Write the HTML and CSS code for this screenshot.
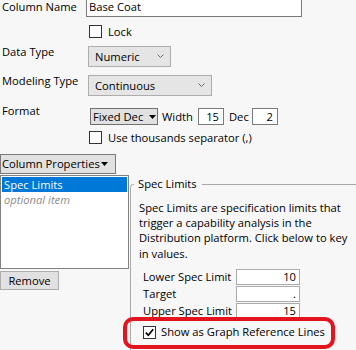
FILE: index.html
```html
<!DOCTYPE html>
<html>
<head>
<meta charset="utf-8">
<link rel="stylesheet" href="styles.css">
</head>
<body>
<div class="page">
  <div class="row r-name">
    <span class="label">Column Name</span>
    <input class="textbox name-input" type="text" value="Base Coat" readonly>
  </div>
  <div class="row r-lock indented">
    <span class="check"></span><span class="check-text">Lock</span>
  </div>
  <div class="row r-dtype">
    <span class="label">Data Type</span>
    <div class="combo combo-numeric"><span>Numeric</span>
      <svg class="chev" width="7" height="4" viewBox="0 0 7 4"><polyline points="0.5,0.5 3.5,3.5 6.5,0.5" fill="none" stroke="#6a6a6a" stroke-width="1"/></svg>
    </div>
  </div>
  <div class="row r-mtype">
    <span class="label">Modeling Type</span>
    <div class="combo combo-cont"><span>Continuous</span>
      <svg class="chev" width="7" height="4" viewBox="0 0 7 4"><polyline points="0.5,0.5 3.5,3.5 6.5,0.5" fill="none" stroke="#6a6a6a" stroke-width="1"/></svg>
    </div>
  </div>
  <div class="row r-format">
    <span class="label">Format</span>
    <div class="dropdown"><span>Fixed Dec</span>
      <svg width="7" height="4" viewBox="0 0 7 4"><polygon points="0,0 7,0 3.5,4" fill="#000"/></svg>
    </div>
    <span class="unit-label w-label">Width</span>
    <input class="textbox num-input" type="text" value="15" readonly>
    <span class="unit-label d-label">Dec</span>
    <input class="textbox num-input" type="text" value="2" readonly>
  </div>
  <div class="row r-sep indented">
    <span class="check"></span><span class="check-text">Use thousands separator (,)</span>
  </div>
  <div class="row r-props">
    <div class="button props-btn"><span>Column Properties</span>
      <svg width="7" height="4" viewBox="0 0 7 4"><polygon points="0,0 7,0 3.5,4" fill="#000"/></svg>
    </div>
  </div>
  <div class="bottom">
    <div class="left">
      <div class="listbox">
        <div class="item selected">Spec Limits</div>
        <div class="item placeholder">optional item</div>
      </div>
      <div class="button remove-btn">Remove</div>
    </div>
    <fieldset class="group">
      <legend>Spec Limits</legend>
      <p class="desc">Spec Limits are specification limits that<br>trigger a capability analysis in the<br>Distribution platform. Click below to key<br>in values.</p>
      <div class="spec-grid">
        <span class="spec-label">Lower Spec Limit</span>
        <input class="textbox spec-input" type="text" value="10" readonly>
        <span class="spec-label">Target</span>
        <input class="textbox spec-input" type="text" value="." readonly>
        <span class="spec-label">Upper Spec Limit</span>
        <input class="textbox spec-input" type="text" value="15" readonly>
      </div>
      <div class="show-row">
        <span class="check checked"><svg width="11" height="11" viewBox="0 0 11 11"><polyline points="1.8,5.6 4.3,8.2 9.2,2.2" fill="none" stroke="#000" stroke-width="1.7"/></svg></span>
        <span class="check-text show-text">Show as Graph Reference Lines</span>
        <div class="callout"></div>
      </div>
    </fieldset>
  </div>
</div>
</body>
</html>
```
FILE: styles.css
```css
html, body {
  margin: 0;
  padding: 0;
  background: #f7f7f7;
  overflow: hidden;
}
body {
  font-family: "Open Sans", "Noto Sans", sans-serif;
  font-size: 11.2px;
  line-height: 16px;
  color: #000;
}
.page {
  width: 356px;
  height: 350px;
  overflow: hidden;
}
.row {
  display: flex;
  align-items: center;
  white-space: nowrap;
}
.indented {
  padding-left: 89px;
}
.label {
  width: 86px;
  flex: none;
  padding-left: 2px;
  box-sizing: border-box;
  align-self: flex-start;
}
.textbox {
  box-sizing: border-box;
  border: 1px solid #7a7a7a;
  background: #fff;
  font: inherit;
  color: #000;
  margin: 0;
  outline: none;
  border-radius: 0;
}
.r-name {
  margin-top: -3px;
  height: 20px;
}
.r-name .label {
  margin-top: 1.5px;
}
.name-input {
  width: 216px;
  height: 20px;
  padding: 0 2px 2px 2px;
}
.r-lock {
  margin-top: 7px;
  height: 15px;
}
.check {
  width: 13px;
  height: 13px;
  box-sizing: border-box;
  border: 1px solid #333;
  background: #fff;
  flex: none;
  display: flex;
}
.check-text {
  margin-left: 6px;
}
.r-dtype {
  margin-top: 7px;
  height: 21px;
}
.r-mtype {
  margin-top: 8px;
  height: 21px;
}
.r-dtype .label,
.r-mtype .label {
  margin-top: -2.5px;
}
.combo {
  box-sizing: border-box;
  height: 21px;
  margin-left: 2px;
  border: 1px solid #adadad;
  background: #e5e5e5;
  display: flex;
  align-items: center;
  justify-content: space-between;
  padding: 0 6px;
}
.chev {
  margin-top: -2px;
}
.combo-numeric {
  width: 83px;
}
.combo-cont {
  width: 124px;
}
.r-format {
  margin-top: 12px;
  height: 17px;
}
.r-format .label {
  margin-top: -5.3px;
}
.dropdown {
  box-sizing: border-box;
  width: 68px;
  height: 17px;
  margin-left: 4px;
  border: 1px solid #707070;
  background: #e1e1e1;
  display: flex;
  align-items: center;
  justify-content: space-between;
  padding: 0 1px 0 2px;
}
.unit-label {
  flex: none;
}
.w-label {
  width: 36px;
  margin-left: 4px;
}
.d-label {
  width: 23px;
  margin-left: 5px;
}
.num-input {
  width: 26px;
  height: 17px;
  padding: 0 4px 0 0;
  text-align: right;
}
.r-sep {
  margin-top: 4px;
  height: 17px;
}
.r-props {
  margin-top: 8px;
}
.button {
  box-sizing: border-box;
  background: #e1e1e1;
  border: 1px solid #7a7a7a;
}
.props-btn {
  width: 116px;
  height: 20px;
  display: flex;
  align-items: center;
  justify-content: space-between;
  padding: 0 7px 1px 1px;
}
.bottom {
  display: flex;
  align-items: flex-start;
  margin-top: 1px;
}
.left {
  width: 130px;
  flex: none;
}
.listbox {
  box-sizing: border-box;
  width: 129px;
  height: 94px;
  border: 1px solid #828282;
  background: #fff;
  padding: 1px;
}
.item {
  height: 15px;
  line-height: 15px;
  padding-left: 2px;
  white-space: nowrap;
}
.item.selected {
  background: #0078d7;
  color: #fff;
}
.item.placeholder {
  color: #8c8c8c;
  font-style: italic;
}
.remove-btn {
  margin-top: 2px;
  width: 59px;
  height: 19px;
  line-height: 17px;
  text-align: center;
  border-color: #adadad;
}
.group {
  flex: none;
  box-sizing: border-box;
  width: 240px;
  height: 200px;
  min-width: 0;
  margin: 1px 0 0 0;
  padding: 8px 0 0 3px;
  border: 1px solid #a9a9a9;
  border-radius: 3px;
}
.group legend {
  padding: 0 5px 0 4px;
  line-height: 16px;
}
.desc {
  margin: 0 0 0 5px;
  line-height: 15.2px;
  white-space: nowrap;
}
.spec-grid {
  display: grid;
  grid-template-columns: 93px 64px;
  grid-auto-rows: 17px;
  margin: 8px 0 0 9px;
}
.spec-label {
  align-self: center;
  white-space: nowrap;
}
.spec-input {
  width: 64px;
  height: 16px;
  align-self: start;
  padding: 0 3px 0 0;
  text-align: right;
  border-color: #ababab;
}
.show-row {
  position: relative;
  display: flex;
  align-items: center;
  height: 17px;
  margin: 4px 0 0 9px;
  white-space: nowrap;
}
.show-text {
  margin-left: 5px;
}
.callout {
  position: absolute;
  left: -20px;
  top: -7px;
  width: 212px;
  height: 32px;
  box-sizing: border-box;
  border: 4px solid #e3141d;
  border-radius: 10px;
  pointer-events: none;
}
```
